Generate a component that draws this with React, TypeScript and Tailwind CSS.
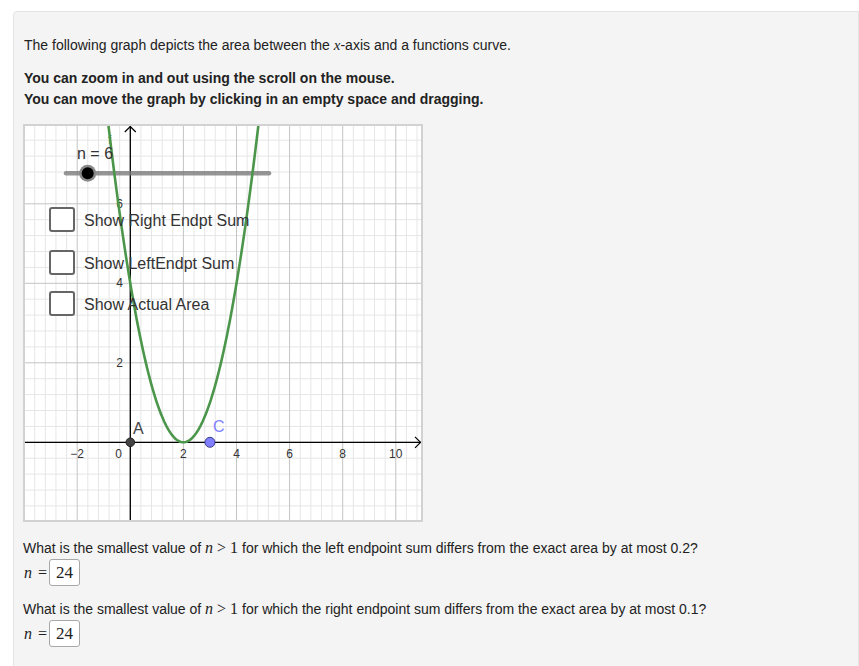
const OX = 130.3;
const OY = 442.3;
const SX = 26.55;
const SY = 39.75;

const px = (u: number) => OX + u * SX;
const py = (v: number) => OY - v * SY;

function Graph() {
  const vLines: { x: number; major: boolean }[] = [];
  for (let k = -10; k <= 28; k++) vLines.push({ x: px(k * 0.4), major: k % 5 === 0 });
  const hLines: { y: number; major: boolean }[] = [];
  for (let k = -5; k <= 20; k++) hLines.push({ y: py(k * 0.4), major: k % 5 === 0 });

  let d = "";
  for (let u = -1; u <= 5.2; u += 0.04) {
    const v = (u - 2) * (u - 2);
    d += (d ? " L" : "M") + px(u).toFixed(2) + " " + py(v).toFixed(2);
  }

  const xLabels = [
    { t: "−2", u: -2 },
    { t: "2", u: 2 },
    { t: "4", u: 4 },
    { t: "6", u: 6 },
    { t: "8", u: 8 },
    { t: "10", u: 10 },
  ];

  return (
    <div className="relative -ml-px w-[400px] h-[398px] border-2 border-[#d2d2d2] bg-white overflow-hidden">
      <svg width="396" height="394" viewBox="25 126 396 394" className="block">
        {vLines.filter((l) => !l.major).map((l, i) => (
          <line key={"vm" + i} x1={l.x} y1={120} x2={l.x} y2={530} stroke="#e6e6e6" strokeWidth="1" />
        ))}
        {hLines.filter((l) => !l.major).map((l, i) => (
          <line key={"hm" + i} x1={20} y1={l.y} x2={430} y2={l.y} stroke="#e6e6e6" strokeWidth="1" />
        ))}
        {vLines.filter((l) => l.major).map((l, i) => (
          <line key={"vM" + i} x1={l.x} y1={120} x2={l.x} y2={530} stroke="#c4c4c4" strokeWidth="1" />
        ))}
        {hLines.filter((l) => l.major).map((l, i) => (
          <line key={"hM" + i} x1={20} y1={l.y} x2={430} y2={l.y} stroke="#c4c4c4" strokeWidth="1" />
        ))}

        {/* axes */}
        <line x1={20} y1={OY} x2={421} y2={OY} stroke="#000" strokeWidth="1.3" />
        <line x1={OX} y1={126} x2={OX} y2={530} stroke="#000" strokeWidth="1.3" />
        <polyline points={`${OX - 5.5},${132} ${OX},${126.5} ${OX + 5.5},${132}`} fill="none" stroke="#000" strokeWidth="1.2" />
        <polyline points={`415,${OY - 5.5} 420.5,${OY} 415,${OY + 5.5}`} fill="none" stroke="#000" strokeWidth="1.2" />

        <g fontFamily="'Liberation Sans', Arial, sans-serif" fontSize="12" fill="#333">
          {xLabels.map((l) => (
            <text key={l.t} x={px(l.u)} y={458} textAnchor="middle">
              {l.t}
            </text>
          ))}
          <text x={122} y={458} textAnchor="end">0</text>
          <text x={123} y={py(6) + 4} textAnchor="end">6</text>
          <text x={123} y={py(4) + 4} textAnchor="end">4</text>
          <text x={123} y={py(2) + 4} textAnchor="end">2</text>
        </g>

        {/* slider */}
        <line x1={66} y1={173.3} x2={269} y2={173.3} stroke="#7a7a7a" strokeOpacity="0.8" strokeWidth="4.5" strokeLinecap="round" />

        {/* function */}
        <path d={d} fill="none" stroke="#4b964b" strokeWidth="2.6" strokeLinejoin="round" />
        <text x={108} y={143.5} fontFamily="'Liberation Sans', Arial, sans-serif" fontSize="12" fill="#4b964b">f</text>

        <circle cx={87.7} cy={173.3} r={8.5} fill="#8a8a8a" />
        <circle cx={87.7} cy={173.3} r={6} fill="#000" />

        {/* points */}
        <circle cx={OX} cy={OY} r={4.3} fill="#444" stroke="#222" strokeWidth="1" />
        <circle cx={px(3)} cy={OY} r={5} fill="#7f7fff" stroke="#3b3b8a" strokeWidth="1" />
        <g fontFamily="'Liberation Sans', Arial, sans-serif" fontSize="16">
          <text x={133} y={434} fill="#444">A</text>
          <text x={213} y={432} fill="#8080ff">C</text>
        </g>
        <text x={77} y={159} fontFamily="'Liberation Sans', Arial, sans-serif" fontSize="16" fill="#333">n = 6</text>
      </svg>

      <div className="absolute left-[24px] top-[81px] flex flex-col font-['Liberation_Sans',Arial,sans-serif] text-[16px] text-[#333]">
        {["Show Right Endpt Sum", "Show LeftEndpt Sum", "Show Actual Area"].map((t, i) => (
          <div key={t} className={"flex items-center gap-[9px] h-[25px] " + (i === 1 ? "mt-[18px]" : i === 2 ? "mt-[16px]" : "")}>
            <div className="w-[26px] h-[25px] rounded-[3px] border-2 border-[#666] bg-white" />
            <span className="leading-none translate-y-[0.5px]">{t}</span>
          </div>
        ))}
      </div>
    </div>
  );
}

function M({ children }: { children: React.ReactNode }) {
  return <span className="font-['Liberation_Serif','Times_New_Roman',serif] text-[16px]">{children}</span>;
}

function Answer() {
  return (
    <div className="flex items-center h-[27px]">
      <M>
        <i>n</i>
      </M>
      <span className="ml-[6px] font-['Liberation_Serif',serif] text-[16px]">=</span>
      <div className="ml-[2px] w-[31px] h-[27px] rounded-[3px] border border-[#a8a8a8] bg-white flex items-center justify-center font-['Liberation_Serif',serif] text-[17px] text-[#222]">
        24
      </div>
    </div>
  );
}

function Ineq() {
  return (
    <M>
      <i>n</i>
      <span className="mx-[4px]">&gt;</span>1
    </M>
  );
}

export default function App() {
  return (
    <div className="min-h-screen bg-white pt-[11px] pl-[13px]">
      <div className="w-[846px] h-[660px] bg-[#f4f4f4] border border-[#e4e4e4] rounded-tl-[4px] pl-[10px] pt-[23px] font-['Liberation_Sans',Arial,sans-serif] text-[14px] leading-[21px] text-[#222]">
        <p>
          The following graph depicts the area between the{" "}
          <i className="font-['Liberation_Serif',serif] text-[15px]">x</i>-axis and a functions curve.
        </p>
        <p className="mt-[12px] font-bold">
          You can zoom in and out using the scroll on the mouse.
          <br />
          You can move the graph by clicking in an empty space and dragging.
        </p>
        <div className="mt-[14px]">
          <Graph />
        </div>
        <p className="mt-[15px] -ml-px">
          What is the smallest value of <Ineq /> for which the left endpoint sum differs from the exact area by at most 0.2?
        </p>
        <Answer />
        <p className="mt-[12px] -ml-px">
          What is the smallest value of <Ineq /> for which the right endpoint sum differs from the exact area by at most 0.1?
        </p>
        <Answer />
      </div>
    </div>
  );
}
